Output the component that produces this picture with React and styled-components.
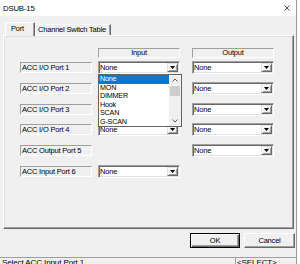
import React from 'react';
import styled, { createGlobalStyle } from 'styled-components';

const GlobalStyle = createGlobalStyle`
  html, body { margin: 0; padding: 0; background: #fff; }
  body {
    font-family: "Liberation Sans", Arial, sans-serif;
    font-size: 7.5px;
    letter-spacing: -0.2px;
    color: #000;
  }
`;

const Window = styled.div`
  width: 296px;
  height: 264px;
  background: #f0f0f0;
  border-right: 1px solid #9a9a9a;
  display: flex;
  flex-direction: column;
  overflow: hidden;
`;

const TitleBar = styled.div`
  height: 16px;
  flex: none;
  background: #fff;
  display: flex;
  align-items: center;
  justify-content: space-between;
  padding: 0 6px 0 3px;
  font-size: 7.8px;
`;

const Body = styled.div`
  flex: none;
  display: flex;
  flex-direction: column;
  padding: 6px 2px 0 3px;
`;

const TabStrip = styled.div`
  height: 13px;
  display: flex;
  align-items: flex-end;
  padding-left: 2px;
`;

const Tab = styled.div`
  box-sizing: border-box;
  width: ${p => p.$w}px;
  height: ${p => (p.$active ? 14 : 11)}px;
  margin-bottom: ${p => (p.$active ? -1 : 0)}px;
  position: relative;
  z-index: ${p => (p.$active ? 2 : 1)};
  background: #f0f0f0;
  border-top: 1px solid #fff;
  border-left: 1px solid #fff;
  border-right: 1px solid #696969;
  box-shadow: inset -1px 0 0 #a0a0a0;
  padding-left: ${p => p.$pl}px;
  line-height: ${p => (p.$active ? 11 : 10)}px;
  white-space: nowrap;
`;

const Panel = styled.div`
  box-sizing: border-box;
  height: 194px;
  border-top: 1px solid #fff;
  border-left: 1px solid #fff;
  border-right: 1px solid #696969;
  border-bottom: 1px solid #696969;
  box-shadow: inset -1px -1px 0 #a0a0a0, inset 1px 1px 0 #e3e3e3;
  padding: 12px 0 0 16px;
  display: flex;
  flex-direction: column;
`;

const Row = styled.div`
  display: flex;
  align-items: flex-start;
  height: ${p => p.$h}px;
`;

const Slot = styled.div`
  width: ${p => p.$w}px;
  margin-right: ${p => p.$mr || 0}px;
  flex: none;
`;

const Static = styled.div`
  box-sizing: border-box;
  height: ${p => p.$h}px;
  margin-top: ${p => p.$mt || 0}px;
  border: 1px solid;
  border-color: #a0a0a0 #fff #fff #a0a0a0;
  text-align: ${p => (p.$center ? 'center' : 'left')};
  padding-left: ${p => (p.$center ? 0 : 1)}px;
  line-height: ${p => p.$h - 2}px;
  white-space: nowrap;
  overflow: hidden;
`;

const ComboBox = styled.div`
  position: relative;
  box-sizing: border-box;
  height: 13px;
  background: #fff;
  border: 1px solid;
  border-color: #a0a0a0 #fff #fff #a0a0a0;
  box-shadow: inset 1px 1px 0 #696969, inset -1px -1px 0 #e3e3e3;
  display: flex;
  align-items: stretch;
  padding: 1px;
`;

const ComboText = styled.div`
  flex: 1;
  line-height: 9px;
  white-space: nowrap;
  overflow: hidden;
`;

const ArrowButton = styled.div`
  box-sizing: border-box;
  width: 11px;
  background: #f0f0f0;
  border-top: 1px solid #e3e3e3;
  border-left: 1px solid #e3e3e3;
  border-right: 1px solid #696969;
  border-bottom: 1px solid #696969;
  box-shadow: inset 1px 1px 0 #fff, inset -1px -1px 0 #a0a0a0;
  display: flex;
  align-items: center;
  justify-content: center;
`;

const DropList = styled.div`
  position: absolute;
  z-index: 10;
  left: -1px;
  top: calc(100% + 1px);
  width: 84px;
  height: 53px;
  box-sizing: border-box;
  background: #fff;
  border: 1px solid #646464;
  display: flex;
`;

const Items = styled.div`
  flex: 1;
  display: flex;
  flex-direction: column;
`;

const Item = styled.div`
  height: 8.5px;
  line-height: 8.5px;
  font-size: 7.2px;
  padding-left: 1px;
  overflow: hidden;
  background: ${p => (p.$sel ? '#0078d7' : 'transparent')};
  color: ${p => (p.$sel ? '#fff' : '#000')};
  white-space: nowrap;
`;

const ScrollBar = styled.div`
  width: 12px;
  background: #f0f0f0;
  display: flex;
  flex-direction: column;
`;

const ScrollArrow = styled.div`
  height: 10px;
  display: flex;
  align-items: center;
  justify-content: center;
`;

const Thumb = styled.div`
  height: 10px;
  margin: 1px 1px 0;
  background: #cdcdcd;
`;

const Spacer = styled.div`
  flex: 1;
`;

const ButtonRow = styled.div`
  height: 24px;
  flex: none;
  display: flex;
  justify-content: flex-end;
  align-items: flex-start;
  padding: 4px 1px 0 0;
  gap: 4px;
`;

const Button = styled.div`
  box-sizing: border-box;
  width: ${p => p.$w}px;
  height: 15px;
  background: #f0f0f0;
  border: 1px solid;
  border-color: ${p => (p.$default ? '#000' : '#fff #696969 #696969 #fff')};
  box-shadow: ${p =>
    p.$default
      ? 'inset 1px 1px 0 #fff, inset -1px -1px 0 #696969, inset -2px -2px 0 #a0a0a0'
      : 'inset -1px -1px 0 #a0a0a0'};
  display: flex;
  align-items: center;
  justify-content: center;
`;

const StatusBar = styled.div`
  height: 11px;
  flex: none;
  display: flex;
  font-size: 8px;
  letter-spacing: -0.1px;
`;

const StatusPane = styled.div`
  box-sizing: border-box;
  width: ${p => (p.$w ? `${p.$w}px` : 'auto')};
  flex: ${p => (p.$w ? 'none' : 1)};
  border-top: 1px solid #a0a0a0;
  border-left: ${p => (p.$first ? 'none' : '1px solid #a0a0a0')};
  padding: 0 0 0 ${p => (p.$first ? 2 : 1)}px;
  line-height: 10px;
  white-space: nowrap;
  overflow: hidden;
`;

const DownTri = () => (
  <svg width="5" height="3" viewBox="0 0 5 3">
    <path d="M0 0 H5 L2.5 3 Z" fill="#000" />
  </svg>
);

const Chevron = ({ up }) => (
  <svg width="6" height="4" viewBox="0 0 6 4">
    <path d={up ? 'M0.5 3.5 L3 1 L5.5 3.5' : 'M0.5 0.5 L3 3 L5.5 0.5'} fill="none" stroke="#606060" strokeWidth="1" />
  </svg>
);

const CloseIcon = () => (
  <svg width="6" height="6" viewBox="0 0 6 6">
    <path d="M0.5 0.5 L5.5 5.5 M5.5 0.5 L0.5 5.5" stroke="#222" strokeWidth="0.8" />
  </svg>
);

const Combo = ({ value, children }) => (
  <ComboBox>
    <ComboText>{value}</ComboText>
    <ArrowButton><DownTri /></ArrowButton>
    {children}
  </ComboBox>
);

const options = ['None', 'MON', 'DIMMER', 'Hook', 'SCAN', 'G-SCAN'];

const rows = [
  { label: 'ACC I/O Port 1', input: true, output: true, open: true },
  { label: 'ACC I/O Port 2', input: true, output: true },
  { label: 'ACC I/O Port 3', input: true, output: true },
  { label: 'ACC I/O Port 4', input: true, output: true },
  { label: 'ACC Output Port 5', input: false, output: true },
  { label: 'ACC Input Port 6', input: true, output: false },
];

export default function App() {
  return (
    <>
      <GlobalStyle />
      <Window>
        <TitleBar>
          <span>DSUB-15</span>
          <CloseIcon />
        </TitleBar>
        <Body>
          <TabStrip>
            <Tab $active $w={30} $pl={5}>Port</Tab>
            <Tab $w={76} $pl={2}>Channel Switch Table</Tab>
          </TabStrip>
          <Panel>
            <Row $h={13}>
              <Slot $w={72} $mr={6} />
              <Slot $w={82} $mr={12}><Static $h={10} $center>Input</Static></Slot>
              <Slot $w={82}><Static $h={10} $center>Output</Static></Slot>
            </Row>
            {rows.map(r => (
              <Row key={r.label} $h={20.75}>
                <Slot $w={72} $mr={6}><Static $h={11} $mt={1}>{r.label}</Static></Slot>
                <Slot $w={82} $mr={12}>
                  {r.input && (
                    <Combo value="None">
                      {r.open && (
                        <DropList>
                          <Items>
                            {options.map((o, i) => (
                              <Item key={o} $sel={i === 0}>{o}</Item>
                            ))}
                          </Items>
                          <ScrollBar>
                            <ScrollArrow><Chevron up /></ScrollArrow>
                            <Thumb />
                            <Spacer />
                            <ScrollArrow><Chevron /></ScrollArrow>
                          </ScrollBar>
                        </DropList>
                      )}
                    </Combo>
                  )}
                </Slot>
                <Slot $w={82}>{r.output && <Combo value="None" />}</Slot>
              </Row>
            ))}
          </Panel>
        </Body>
        <ButtonRow>
          <Button $default $w={50}>OK</Button>
          <Button $w={51}>Cancel</Button>
        </ButtonRow>
        <StatusBar>
          <StatusPane $first $w={235}>Select ACC Input Port 1</StatusPane>
          <StatusPane>&lt;SELECT&gt;</StatusPane>
        </StatusBar>
      </Window>
    </>
  );
}
